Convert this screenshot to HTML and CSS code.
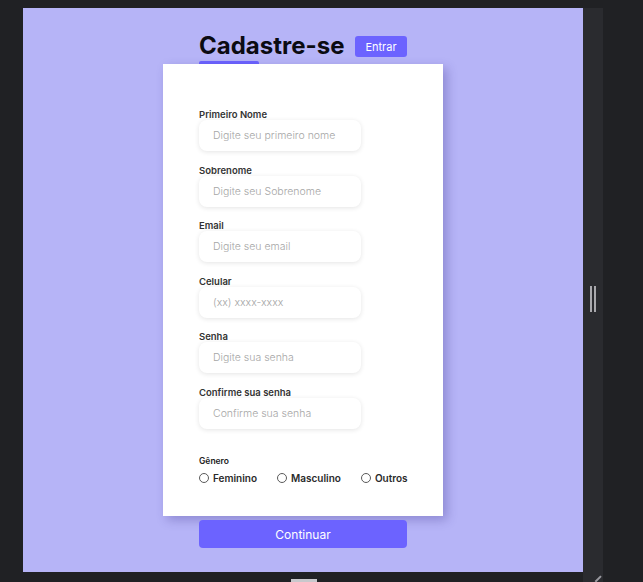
FILE: index.html
```html
<!DOCTYPE html>
<html lang="pt-BR">
<head>
<meta charset="utf-8">
<title>Cadastre-se</title>
<link rel="stylesheet" href="styles.css">
</head>
<body>
<div class="frame">
  <main class="stage">
    <header class="head">
      <div class="head-row">
        <h1 class="title">Cadastre-se</h1>
        <button class="btn-enter" type="button">Entrar</button>
      </div>
      <div class="underline"></div>
    </header>
    <form class="card">
      <div class="group">
        <label class="label">Primeiro Nome</label>
        <input class="field" type="text" placeholder="Digite seu primeiro nome">
      </div>
      <div class="group">
        <label class="label">Sobrenome</label>
        <input class="field" type="text" placeholder="Digite seu Sobrenome">
      </div>
      <div class="group">
        <label class="label">Email</label>
        <input class="field" type="email" placeholder="Digite seu email">
      </div>
      <div class="group">
        <label class="label">Celular</label>
        <input class="field" type="tel" placeholder="(xx) xxxx-xxxx">
      </div>
      <div class="group">
        <label class="label">Senha</label>
        <input class="field" type="password" placeholder="Digite sua senha">
      </div>
      <div class="group">
        <label class="label">Confirme sua senha</label>
        <input class="field" type="password" placeholder="Confirme sua senha">
      </div>
      <div class="gender">
        <div class="gender-label">Gênero</div>
        <div class="radios">
          <label class="radio"><input type="radio" name="g"><span>Feminino</span></label>
          <label class="radio"><input type="radio" name="g"><span>Masculino</span></label>
          <label class="radio"><input type="radio" name="g"><span>Outros</span></label>
        </div>
      </div>
    </form>
    <button class="btn-continue" type="button">Continuar</button>
  </main>
  <div class="gutter"><div class="grip"></div></div>
</div>
<div class="bottom-tab"></div>
<div class="corner"></div>
</body>
</html>
```

FILE: styles.css
```css
* { box-sizing: border-box; }
html, body { margin: 0; padding: 0; }
body {
  background: #202124;
  width: 643px;
  height: 582px;
  overflow: hidden;
  font-family: Inter, "Noto Sans", sans-serif;
  position: relative;
}
.frame {
  display: flex;
  padding-top: 8px;
  padding-left: 23px;
}
.stage {
  width: 560px;
  height: 564px;
  background: #b6b4f7;
  display: flex;
  flex-direction: column;
  align-items: center;
  padding-top: 24px;
}
.head { width: 208px; }
.head-row {
  display: flex;
  align-items: center;
  justify-content: space-between;
}
.title {
  margin: 0;
  font-size: 24px;
  line-height: 28px;
  font-weight: 700;
  color: #0b0b12;
}
.btn-enter {
  border: none;
  background: #6c63ff;
  color: #fff;
  font-family: inherit;
  font-size: 11px;
  height: 21px;
  width: 52px;
  border-radius: 3px;
  padding: 0;
  margin-top: 1px;
}
.underline {
  width: 60px;
  height: 3px;
  background: #6c63ff;
  margin-top: 1px;
  border-radius: 2px 2px 0 0;
}
.card {
  width: 280px;
  background: #fff;
  padding: 45px 36px 31px;
  box-shadow: 4px 4px 10px rgba(40, 30, 120, 0.28);
  display: flex;
  flex-direction: column;
  gap: 13.5px;
}
.group { display: flex; flex-direction: column; }
.label {
  font-size: 9.5px;
  line-height: 12px;
  font-weight: 600;
  color: #333;
  margin-bottom: -1px;
}
.field {
  width: 162px;
  height: 31px;
  border: none;
  border-radius: 8px;
  box-shadow: 0 1px 5px rgba(0, 0, 0, 0.11);
  padding: 0 0 0 14px;
  font-family: inherit;
  font-size: 10.5px;
  background: #fff;
  outline: none;
}
.field::placeholder { color: #a6a6a6; font-weight: 300; }
.gender { margin-top: 13.5px; }
.gender-label {
  font-size: 8.5px;
  line-height: 11px;
  font-weight: 600;
  color: #222;
  margin-bottom: 4.5px;
}
.radios { display: flex; gap: 20px; }
.radio {
  display: flex;
  align-items: center;
  gap: 4px;
  font-size: 10px;
  line-height: 14px;
  font-weight: 600;
  color: #2a2a2a;
}
.radio input {
  appearance: none;
  -webkit-appearance: none;
  margin: 0;
  width: 10px;
  height: 10px;
  border: 1px solid #5a5a5a;
  border-radius: 50%;
  background: #fff;
}
.btn-continue {
  margin-top: 4px;
  width: 208px;
  height: 28px;
  border: none;
  border-radius: 4px;
  background: #6c63ff;
  color: #fff;
  font-family: inherit;
  font-size: 12px;
  padding: 0;
}
.gutter {
  width: 20px;
  height: 574px;
  background: #2a2b2f;
  display: flex;
  align-items: center;
  justify-content: center;
}
.grip {
  width: 6px;
  height: 26px;
  border-left: 2px solid #a9a9ad;
  border-right: 2px solid #a9a9ad;
  margin-top: 8px;
  margin-left: -1px;
}
.bottom-tab {
  position: absolute;
  left: 291px;
  top: 579px;
  width: 26px;
  height: 3px;
  background: #c8c8cc;
}
.corner {
  position: absolute;
  left: 594px;
  top: 578px;
  width: 8px;
  height: 1.5px;
  background: #9a9aa0;
  transform: rotate(-45deg);
}
```
